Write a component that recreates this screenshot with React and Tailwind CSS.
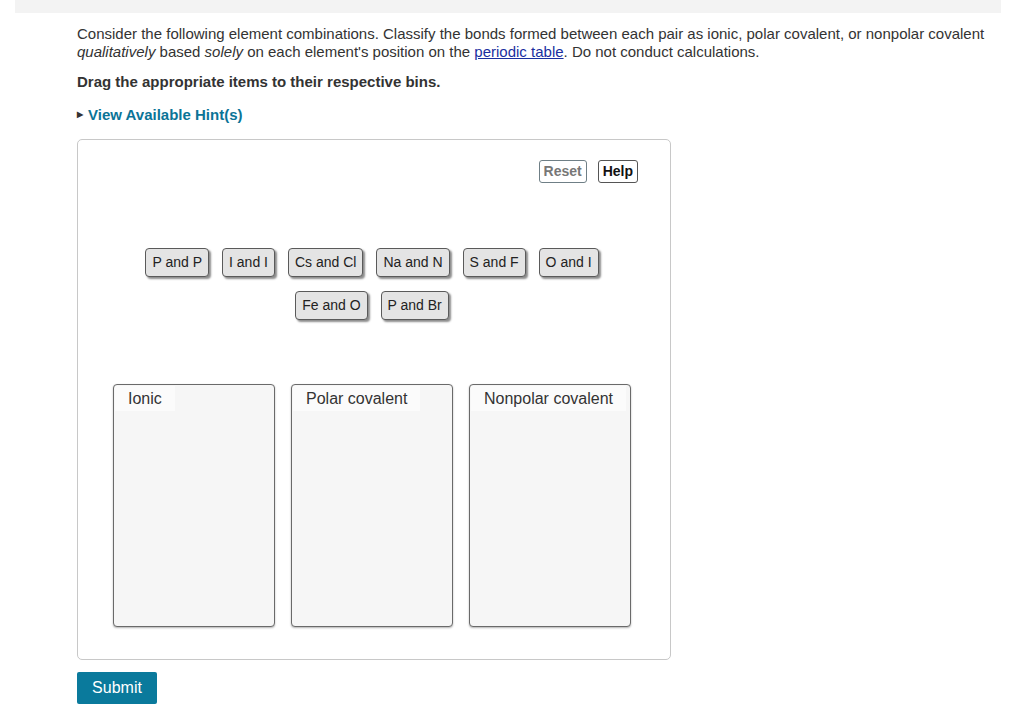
import React from 'react';

const items1 = ['P and P', 'I and I', 'Cs and Cl', 'Na and N', 'S and F', 'O and I'];
const items2 = ['Fe and O', 'P and Br'];
const bins = ['Ionic', 'Polar covalent', 'Nonpolar covalent'];

function Item({ label }) {
  return (
    <div className="h-[29px] px-[6px] flex items-center rounded-[4px] border border-[#5a5a5a] bg-[#e4e4e4] text-[14px] text-[#222] shadow-[2px_2px_2px_rgba(0,0,0,0.45)]">
      {label}
    </div>
  );
}

export default function App() {
  return (
    <div className="min-h-[725px] bg-white text-[#333] font-['Liberation_Sans',Arial,sans-serif]">
      <div className="ml-[15px] mr-[23px] h-[13px] bg-[#f3f3f3]" />
      <div className="pl-[77px] pr-[30px]">
        <p className="mt-[12px] text-[15px] leading-[18px]">
          Consider the following element combinations. Classify the bonds formed between each pair as ionic, polar covalent, or nonpolar covalent
          <br />
          <i>qualitatively</i> based <i>solely</i> on each element's position on the{' '}
          <a href="#" className="text-[#1a2fa0] underline">periodic table</a>. Do not conduct calculations.
        </p>
        <p className="mt-[12px] text-[15px] leading-[18px] font-bold">Drag the appropriate items to their respective bins.</p>
        <div className="mt-[15px] flex items-center gap-[5px] text-[15px] leading-[18px] font-bold text-[#0b7497]">
          <span className="text-[8px] text-[#333]">▶</span>
          <span>View Available Hint(s)</span>
        </div>

        <div className="mt-[15px] w-[594px] h-[521px] rounded-[5px] border border-[#c8c8c8] flex flex-col">
          <div className="mt-[20px] mr-[32px] flex justify-end gap-[11px]">
            <button className="h-[23px] px-[4px] rounded-[3px] border border-[#6f7f86] bg-white text-[14px] font-bold text-[#777]">Reset</button>
            <button className="h-[23px] px-[4px] rounded-[3px] border border-[#555] bg-white text-[14px] font-bold text-[#111]">Help</button>
          </div>
          <div className="mt-[65px] flex flex-col items-center gap-[14px] pr-[4px]">
            <div className="flex gap-[13px]">
              {items1.map((l) => <Item key={l} label={l} />)}
            </div>
            <div className="flex gap-[13px]">
              {items2.map((l) => <Item key={l} label={l} />)}
            </div>
          </div>
          <div className="mt-[64px] flex justify-center gap-[16px] pr-[4px]">
            {bins.map((b) => (
              <div key={b} className="w-[162px] h-[243px] rounded-[4px] border border-[#6a6a6a] bg-[#f6f6f6] shadow-[0_1px_2px_rgba(0,0,0,0.3)]">
                <div className="inline-block ml-[1px] mt-[1px] px-[13px] h-[25px] leading-[25px] bg-[#fbfbfb] text-[16px] text-[#333]">{b}</div>
              </div>
            ))}
          </div>
        </div>

        <button className="mt-[12px] w-[80px] h-[32px] rounded-[2px] bg-[#0a7a9c] text-white text-[16px]">Submit</button>
      </div>
    </div>
  );
}
